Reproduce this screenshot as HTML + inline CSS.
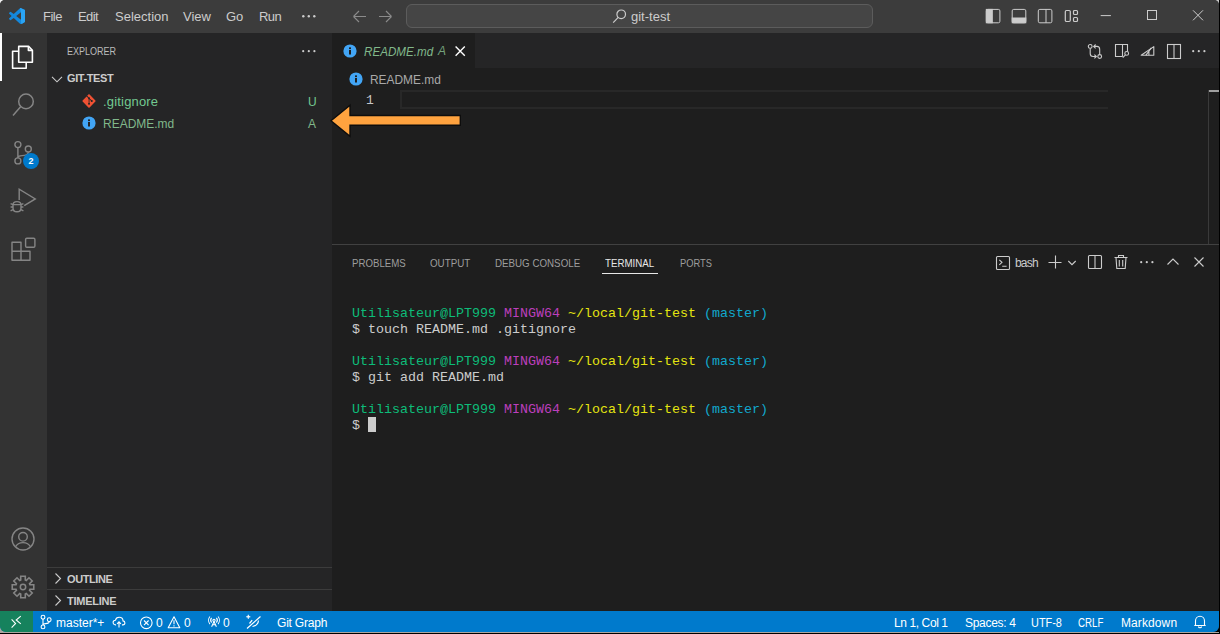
<!DOCTYPE html>
<html><head><meta charset="utf-8">
<style>
*{margin:0;padding:0;box-sizing:border-box}
html,body{width:1220px;height:634px;overflow:hidden;background:#000}
body{position:relative;font-family:"Liberation Sans",sans-serif;}
.a{position:absolute;white-space:nowrap;line-height:1}
.m{font-family:"Liberation Mono",monospace}
svg{position:absolute;overflow:visible}
</style></head><body>
<!-- window frame -->
<div class="a" style="left:0;top:0;width:6px;height:6px;background:#f0f0f0"></div>
<div class="a" style="left:1213px;top:0;width:6px;height:6px;background:#c8c8c8"></div>
<div class="a" style="left:0;top:0;width:1219px;height:632px;background:#3c3c3c;border-radius:5px 5px 6px 6px"></div>
<div class="a" style="left:0;top:632px;width:1219px;height:1px;background:#aca6a0"></div>
<div class="a" style="left:0;top:620px;width:8px;height:12px;background:#aca6a0"></div>

<!-- TITLE BAR -->
<div id="title" class="a" style="left:0;top:0;width:1219px;height:33px;background:#3c3c3c;border-radius:5px 5px 0 0"></div>

<!-- TITLE CONTENT -->
<svg style="left:9px;top:8px" width="16" height="16" viewBox="0 0 100 100">
<path fill="#1488dc" d="M96.5 10.8 75.9.9a6.2 6.2 0 0 0-7.1 1.2L29.4 38 12.2 25a4.2 4.2 0 0 0-5.3.2l-5.5 5a4.2 4.2 0 0 0 0 6.2L16.3 50 1.4 63.6a4.2 4.2 0 0 0 0 6.2l5.5 5a4.2 4.2 0 0 0 5.3.2l17.2-13 39.4 35.9a6.2 6.2 0 0 0 7.1 1.2l20.6-9.9a6.2 6.2 0 0 0 3.5-5.6V16.4a6.2 6.2 0 0 0-3.5-5.6zM75 72.7 45.1 50 75 27.3z"/>
<path fill="#007ACC" d="M96.5 10.8 75.9.9a6.2 6.2 0 0 0-7.1 1.2L29.4 38 12.2 25a4.2 4.2 0 0 0-5.3.2l-5.5 5a4.2 4.2 0 0 0 0 6.2L16.3 50 1.4 63.6a4.2 4.2 0 0 0 0 6.2l5.5 5a4.2 4.2 0 0 0 5.3.2l17.2-13 39.4 35.9a6.2 6.2 0 0 0 7.1 1.2l20.6-9.9a6.2 6.2 0 0 0 3.5-5.6V16.4a6.2 6.2 0 0 0-3.5-5.6zM75 72.7 45.1 50 75 27.3z" opacity=".0"/>
<path fill="#2aa4f4" d="M75.9 99.1a6.2 6.2 0 0 0 7.1-1.2l-.1.1L96.5 89.2a6.2 6.2 0 0 0 3.5-5.6V16.4a6.2 6.2 0 0 0-3.5-5.6L75.9.9A6.2 6.2 0 0 0 68.8 2.1L75 27.3v45.4z"/>
</svg>
<div class="a" style="left:43px;top:10px;font-size:13px;color:#cccccc;letter-spacing:-0.5px">File</div>
<div class="a" style="left:78px;top:10px;font-size:13px;color:#cccccc;letter-spacing:-0.6px">Edit</div>
<div class="a" style="left:115px;top:10px;font-size:13px;color:#cccccc">Selection</div>
<div class="a" style="left:183px;top:10px;font-size:13px;color:#cccccc">View</div>
<div class="a" style="left:226px;top:10px;font-size:13px;color:#cccccc">Go</div>
<div class="a" style="left:259px;top:10px;font-size:13px;color:#cccccc;letter-spacing:-0.6px">Run</div>
<svg style="left:302px;top:15px" width="14" height="3"><circle cx="1.3" cy="1.3" r="1.2" fill="#cccccc"/><circle cx="6.8" cy="1.3" r="1.2" fill="#cccccc"/><circle cx="12.3" cy="1.3" r="1.2" fill="#cccccc"/></svg>
<svg style="left:352px;top:9px" width="15" height="15" fill="none" stroke="#8b8b8b" stroke-width="1.1"><path d="M1.5 7.5H14M1.5 7.5L7 2M1.5 7.5L7 13"/></svg>
<svg style="left:378px;top:9px" width="15" height="15" fill="none" stroke="#8b8b8b" stroke-width="1.1"><path d="M1 7.5H13.5M13.5 7.5L8 2M13.5 7.5L8 13"/></svg>
<div class="a" style="left:406px;top:4px;width:467px;height:24px;background:#454545;border:1px solid #5c5c5c;border-radius:6px"></div>
<svg style="left:612px;top:9px" width="15" height="15" fill="none" stroke="#cccccc" stroke-width="1.2"><circle cx="9.2" cy="5.3" r="4.3"/><path d="M6.2 8.4L1.2 13.6"/></svg>
<div class="a" style="left:631px;top:10px;font-size:13px;color:#cccccc">git-test</div>
<!-- layout icons -->
<svg style="left:985px;top:8px" width="16" height="16" fill="none" stroke="#cccccc" stroke-width="1"><rect x="1.3" y="1.4" width="13.6" height="13.4" rx="1.5"/><rect x="1.3" y="1.4" width="6" height="13.4" fill="#cccccc"/></svg>
<svg style="left:1011px;top:8px" width="16" height="16" fill="none" stroke="#cccccc" stroke-width="1"><rect x="1.2" y="1.4" width="13.6" height="13.4" rx="1.5"/><rect x="1.2" y="10" width="13.6" height="4.8" fill="#cccccc"/></svg>
<svg style="left:1037px;top:8px" width="16" height="16" fill="none" stroke="#cccccc" stroke-width="1"><rect x="1.3" y="1.4" width="13.6" height="13.4" rx="1.5"/><path d="M9 1.4V14.8"/></svg>
<svg style="left:1064px;top:8px" width="16" height="16" fill="none" stroke="#cccccc" stroke-width="1.2"><rect x="1.3" y="2.5" width="5" height="11" rx="1.2"/><rect x="9.5" y="2.5" width="4" height="4" rx="1"/><rect x="9.5" y="9.5" width="4" height="4" rx="1"/></svg>
<svg style="left:1100px;top:10px" width="12" height="12" fill="none" stroke="#cccccc" stroke-width="1"><path d="M0.7 5.6H10.9"/></svg>
<svg style="left:1146px;top:9px" width="12" height="12" fill="none" stroke="#cccccc" stroke-width="1"><rect x="1.5" y="1.5" width="9" height="9"/></svg>
<svg style="left:1192px;top:9px" width="12" height="12" fill="none" stroke="#cccccc" stroke-width="1"><path d="M1 1.3L11 11.3M11 1.3L1 11.3"/></svg>

<!-- ACTIVITY BAR -->
<div class="a" style="left:0;top:33px;width:47px;height:578px;background:#333333"></div>
<!-- SIDEBAR -->

<div class="a" style="left:47px;top:33px;width:285px;height:578px;background:#252526"></div>
<!-- EDITOR -->
<div class="a" style="left:332px;top:33px;width:887px;height:578px;background:#1e1e1e"></div>
<div class="a" style="left:332px;top:33px;width:887px;height:35px;background:#252526"></div>
<div class="a" style="left:332px;top:33px;width:143px;height:35px;background:#1e1e1e"></div>
<!-- ACTIVITY ICONS -->
<div class="a" style="left:0;top:33px;width:2px;height:48px;background:#ffffff"></div>
<svg style="left:10px;top:44px" width="26" height="27" fill="none" stroke="#ffffff" stroke-width="1.6" stroke-linejoin="round">
<path d="M8.7 2.4H18.6L22.4 6.2V18.3H8.7Z"/><path d="M18.4 2.6V6.4H22.2"/><path d="M8.7 7.2H2.6V24.3H16.2V18.5"/>
</svg>
<svg style="left:10px;top:91px" width="28" height="28" fill="none" stroke="#858585" stroke-width="1.5"><circle cx="16" cy="10.4" r="7.3"/><path d="M10.8 15.6L3 24.5"/></svg>
<svg style="left:10px;top:136px" width="28" height="30" fill="none" stroke="#858585" stroke-width="1.4"><circle cx="7.9" cy="8.6" r="3"/><circle cx="18.3" cy="13" r="3"/><circle cx="7.9" cy="24.9" r="3"/><path d="M7.9 11.6V21.9M18.3 16C18.3 19 16 19.6 12 19.6C9.5 19.6 7.9 20.2 7.9 21.9"/></svg>
<div class="a" style="left:23px;top:153px;width:16px;height:16px;border-radius:8px;background:#007acc;color:#fff;font-size:9px;font-weight:bold;text-align:center;line-height:16px">2</div>
<svg style="left:8px;top:186px" width="30" height="30" fill="none" stroke="#858585" stroke-width="1.4" stroke-linejoin="miter">
<path d="M11.2 14V3.2L27.3 12.9L16.2 19.6"/>
<path d="M5 19C5 16.6 6.8 15.6 9 15.6C11.2 15.6 13 16.6 13 19V22C13 24.4 11.2 25.8 9 25.8C6.8 25.8 5 24.4 5 22Z"/><path d="M5 18.6H13M2.6 17.6L5 18.6M15.4 17.6L13 18.6M2.6 21H5M15.4 21H13M2.6 24.8L5 23.6M15.4 24.8L13 23.6"/>
</svg>
<svg style="left:8px;top:234px" width="30" height="30" fill="none" stroke="#858585" stroke-width="1.4" stroke-linejoin="round">
<path d="M4 8.3H13V17.3H22V26.3H4Z"/><path d="M4 17.3H13V26.3"/><rect x="17.6" y="4.2" width="9.3" height="9" rx="1.2"/>
</svg>
<svg style="left:8px;top:524px" width="30" height="30" fill="none" stroke="#858585" stroke-width="1.4"><circle cx="15" cy="15" r="11"/><circle cx="15" cy="12.8" r="4.3"/><path d="M7.4 22.9C9 19.8 11.8 18.6 15 18.6C18.2 18.6 21 19.8 22.6 22.9"/></svg>
<svg style="left:8px;top:572px" width="30" height="30" viewBox="0 0 30 30" fill="none" stroke="#858585" stroke-width="1.6" stroke-linejoin="miter"><path d="M12.70 8.07L12.70 4.24L17.30 4.24L17.30 8.07L18.27 8.47L20.98 5.77L24.23 9.02L21.53 11.73L21.93 12.70L25.76 12.70L25.76 17.30L21.93 17.30L21.53 18.27L24.23 20.98L20.98 24.23L18.27 21.53L17.30 21.93L17.30 25.76L12.70 25.76L12.70 21.93L11.73 21.53L9.02 24.23L5.77 20.98L8.47 18.27L8.07 17.30L4.24 17.30L4.24 12.70L8.07 12.70L8.47 11.73L5.77 9.02L9.02 5.77L11.73 8.47Z"/><circle cx="15" cy="15" r="2.7" stroke-width="1.5"/></svg>

<!-- SIDEBAR CONTENT -->
<div class="a" style="left:67px;top:46px;font-size:11px;color:#bbbbbb;transform:scaleX(0.82);transform-origin:0 0">EXPLORER</div>
<svg style="left:302px;top:50px" width="15" height="3"><circle cx="1.2" cy="1.2" r="1.1" fill="#cccccc"/><circle cx="6.8" cy="1.2" r="1.1" fill="#cccccc"/><circle cx="12.4" cy="1.2" r="1.1" fill="#cccccc"/></svg>
<svg style="left:50px;top:72px" width="14" height="14" fill="none" stroke="#cccccc" stroke-width="1.1"><path d="M2 4.8L7 9.8L12 4.8"/></svg>
<div class="a" style="left:67px;top:73px;font-size:11px;font-weight:bold;color:#cccccc;letter-spacing:-0.4px">GIT-TEST</div>
<svg style="left:82px;top:94px" width="14" height="14" viewBox="0 0 97 97"><path fill="#f05133" d="M92.71 44.408 52.591 4.291c-2.31-2.311-6.057-2.311-8.369 0l-8.33 8.332L46.459 23.19c2.456-.83 5.272-.273 7.229 1.685 1.969 1.97 2.521 4.81 1.67 7.275l10.186 10.185c2.465-.85 5.307-.3 7.275 1.671 2.75 2.75 2.75 7.206 0 9.958-2.752 2.751-7.208 2.751-9.961 0-2.068-2.07-2.58-5.11-1.531-7.658l-9.5-9.499v24.997c.67.332 1.303.774 1.861 1.332 2.75 2.75 2.750 7.206 0 9.959-2.75 2.749-7.209 2.749-9.957 0-2.75-2.754-2.75-7.21 0-9.959.68-.679 1.467-1.193 2.307-1.537v-25.23c-.84-.344-1.625-.853-2.307-1.537-2.083-2.082-2.584-5.14-1.516-7.698L31.798 16.715 4.288 44.222c-2.311 2.313-2.311 6.06 0 8.371l40.121 40.118c2.31 2.311 6.056 2.311 8.369 0L92.71 52.779c2.311-2.311 2.311-6.06 0-8.371z"/></svg>
<div class="a" style="left:103px;top:95px;font-size:13px;color:#73c991;letter-spacing:0.18px">.gitignore</div>
<div class="a" style="left:308px;top:96px;font-size:12px;color:#73c991">U</div>
<svg style="left:82px;top:116px" width="14" height="14" viewBox="0 0 14 14"><circle cx="7" cy="7" r="6.6" fill="#42a5f5"/><rect x="6" y="6" width="2" height="4.5" fill="#252526"/><rect x="6" y="3.4" width="2" height="1.7" fill="#252526"/></svg>
<div class="a" style="left:103px;top:117px;font-size:13px;color:#81b88b;transform:scaleX(0.922);transform-origin:0 0">README.md</div>
<div class="a" style="left:308px;top:118px;font-size:12px;color:#81b88b">A</div>
<div class="a" style="left:47px;top:567px;width:285px;height:1px;background:#3c3c3c"></div>
<svg style="left:51px;top:571px" width="14" height="14" fill="none" stroke="#cccccc" stroke-width="1.1"><path d="M4.5 2.5L9.5 7.5L4.5 12.5"/></svg>
<div class="a" style="left:67px;top:574px;font-size:11px;font-weight:bold;color:#cccccc;letter-spacing:-0.4px">OUTLINE</div>
<div class="a" style="left:47px;top:589px;width:285px;height:1px;background:#3c3c3c"></div>
<svg style="left:51px;top:593px" width="14" height="14" fill="none" stroke="#cccccc" stroke-width="1.1"><path d="M4.5 2.5L9.5 7.5L4.5 12.5"/></svg>
<div class="a" style="left:67px;top:596px;font-size:11px;font-weight:bold;color:#cccccc;letter-spacing:-0.25px">TIMELINE</div>

<!-- EDITOR CONTENT -->
<svg style="left:343px;top:44px" width="14" height="14" viewBox="0 0 14 14"><circle cx="7" cy="7" r="6.6" fill="#42a5f5"/><rect x="6" y="6" width="2" height="4.5" fill="#1e1e1e"/><rect x="6" y="3.4" width="2" height="1.7" fill="#1e1e1e"/></svg>
<div class="a" style="left:364px;top:45px;font-size:13px;font-style:italic;color:#81b88b;transform:scaleX(0.894);transform-origin:0 0">README.md</div>
<div class="a" style="left:438px;top:45px;font-size:12px;font-style:italic;color:#81b88b;opacity:.85">A</div>
<svg style="left:454px;top:45px" width="12" height="12" fill="none" stroke="#ffffff" stroke-width="1.4"><path d="M1.6 1.5L10.8 10.7M10.8 1.5L1.6 10.7"/></svg>
<svg style="left:349px;top:72px" width="14" height="14" viewBox="0 0 14 14"><circle cx="7" cy="7" r="6.6" fill="#42a5f5"/><rect x="6" y="6" width="2" height="4.5" fill="#1e1e1e"/><rect x="6" y="3.4" width="2" height="1.7" fill="#1e1e1e"/></svg>
<div class="a" style="left:370px;top:73px;font-size:13px;color:#a9a9a9;transform:scaleX(0.917);transform-origin:0 0">README.md</div>
<div class="a" style="left:400px;top:90px;width:708px;height:19px;border:2px solid #282828;border-right:none"></div>
<div class="a m" style="left:366px;top:94px;font-size:13px;color:#c6c6c6">1</div>
<div class="a" style="left:1208px;top:90px;width:1px;height:154px;background:#3a3a3a"></div>
<div class="a" style="left:1209px;top:90px;width:10px;height:2px;background:#a0a0a0"></div>
<!-- editor actions -->
<svg style="left:1087px;top:43px" width="17" height="17" fill="none" stroke="#cccccc" stroke-width="1.1"><circle cx="3.2" cy="3.4" r="1.9"/><circle cx="12.7" cy="13.5" r="1.9"/><path d="M3.2 5.3V10.5C3.2 12.3 4.3 13.5 6 13.5H9.2M7.4 11.6L9.3 13.5L7.4 15.4M12.7 11.6V6.4C12.7 4.6 11.6 3.4 9.9 3.4H6.8M8.6 1.5L6.7 3.4L8.6 5.3"/></svg>
<svg style="left:1114px;top:43px" width="17" height="17" fill="none" stroke="#cccccc" stroke-width="1.1"><path d="M8.5 1.5H1.5V13.5H8.7M8.5 1.5H13.5V8.6M8.5 1.5V13.5"/><circle cx="12.7" cy="10.4" r="1.9"/><path d="M11.4 11.8L8.8 14.6"/></svg>
<svg style="left:1139px;top:43px" width="17" height="17" fill="none" stroke="#cccccc" stroke-width="1.1" stroke-linejoin="round"><path d="M2.2 12.3L14.8 3.6V12.3Z"/><path d="M6.8 12.3L12.3 4.9M9.9 12.3V8.3"/></svg>
<svg style="left:1166px;top:43px" width="16" height="17" fill="none" stroke="#cccccc" stroke-width="1.1"><rect x="1.5" y="1.5" width="13" height="14"/><path d="M8 1.5V15.5"/></svg>
<svg style="left:1192px;top:50px" width="15" height="3"><circle cx="1.2" cy="1.2" r="1.1" fill="#cccccc"/><circle cx="6.8" cy="1.2" r="1.1" fill="#cccccc"/><circle cx="12.4" cy="1.2" r="1.1" fill="#cccccc"/></svg>
<!-- arrow -->
<svg style="left:328px;top:103px" width="136" height="36" viewBox="0 0 136 36"><path d="M3 17.7L22 2.2V12.5H132.3V22.2H22V33.2Z" fill="#ffa33f" stroke="#0d0d0d" stroke-width="1.4" stroke-linejoin="miter"/></svg>

<!-- PANEL BORDER -->
<div class="a" style="left:332px;top:244px;width:887px;height:1px;background:#414141"></div>

<!-- PANEL CONTENT -->
<div class="a" style="left:352px;top:258px;font-size:11px;color:#9d9d9d;transform:scaleX(0.879);transform-origin:0 0">PROBLEMS</div>
<div class="a" style="left:430px;top:258px;font-size:11px;color:#9d9d9d;transform:scaleX(0.889);transform-origin:0 0">OUTPUT</div>
<div class="a" style="left:495px;top:258px;font-size:11px;color:#9d9d9d;transform:scaleX(0.8875);transform-origin:0 0">DEBUG CONSOLE</div>
<div class="a" style="left:605px;top:258px;font-size:11px;color:#e7e7e7;transform:scaleX(0.882);transform-origin:0 0">TERMINAL</div>
<div class="a" style="left:602px;top:273px;width:56px;height:1px;background:#e7e7e7"></div>
<div class="a" style="left:680px;top:258px;font-size:11px;color:#9d9d9d;transform:scaleX(0.847);transform-origin:0 0">PORTS</div>
<!-- panel actions -->
<svg style="left:995px;top:255px" width="16" height="16" fill="none" stroke="#cccccc" stroke-width="1.1"><rect x="1.5" y="1.5" width="13" height="13" rx="1"/><path d="M4.3 4.8L7 7.3L4.3 9.8M7.2 11.3H11.6"/></svg>
<div class="a" style="left:1015px;top:257px;font-size:12px;color:#cccccc;letter-spacing:-0.8px">bash</div>
<svg style="left:1047px;top:254px" width="16" height="16" fill="none" stroke="#cccccc" stroke-width="1.1"><path d="M8.5 1.5V14.5M1.5 8.5H14.5"/></svg>
<svg style="left:1067px;top:258px" width="10" height="10" fill="none" stroke="#cccccc" stroke-width="1.1"><path d="M1.3 3L5 6.7L8.7 3"/></svg>
<svg style="left:1087px;top:254px" width="16" height="16" fill="none" stroke="#cccccc" stroke-width="1.1"><rect x="1.5" y="1.5" width="13" height="13" rx="1"/><path d="M8 1.5V14.5"/></svg>
<svg style="left:1113px;top:254px" width="16" height="16" fill="none" stroke="#cccccc" stroke-width="1.1"><path d="M1.5 3.5H14.5M5.5 3.5V1.5H10.5V3.5M3 3.5L3.8 14.5H12.2L13 3.5M6.3 6V12.5M9.7 6V12.5"/></svg>
<svg style="left:1140px;top:261px" width="15" height="3"><circle cx="1.2" cy="1.2" r="1.1" fill="#cccccc"/><circle cx="6.8" cy="1.2" r="1.1" fill="#cccccc"/><circle cx="12.4" cy="1.2" r="1.1" fill="#cccccc"/></svg>
<svg style="left:1166px;top:255px" width="14" height="14" fill="none" stroke="#cccccc" stroke-width="1.1"><path d="M1.5 9.5L7 4L12.5 9.5"/></svg>
<svg style="left:1192px;top:255px" width="14" height="14" fill="none" stroke="#cccccc" stroke-width="1.1"><path d="M2.5 2.5L11.5 11.5M11.5 2.5L2.5 11.5"/></svg>
<!-- terminal -->
<div class="a m" style="left:352px;top:306px;font-size:13.33px;line-height:16px;color:#cccccc;white-space:pre"><span style="color:#0dbc79">Utilisateur@LPT999</span> <span style="color:#bc3fbc">MINGW64</span> <span style="color:#e5e510">~/local/git-test</span> <span style="color:#11a8cd">(master)</span>
$ touch README.md .gitignore

<span style="color:#0dbc79">Utilisateur@LPT999</span> <span style="color:#bc3fbc">MINGW64</span> <span style="color:#e5e510">~/local/git-test</span> <span style="color:#11a8cd">(master)</span>
$ git add README.md

<span style="color:#0dbc79">Utilisateur@LPT999</span> <span style="color:#bc3fbc">MINGW64</span> <span style="color:#e5e510">~/local/git-test</span> <span style="color:#11a8cd">(master)</span>
$ </div>
<div class="a" style="left:368px;top:417px;width:8px;height:15px;background:#cccccc"></div>

<!-- STATUS BAR -->
<div class="a" style="left:0;top:611px;width:1219px;height:21px;background:#007acc;border-radius:0 0 6px 6px"></div>
<div class="a" style="left:0;top:611px;width:33px;height:21px;background:#16825d;border-radius:0 0 0 6px"></div>

<!-- STATUS CONTENT -->
<svg style="left:10px;top:615px" width="13" height="14" fill="none" stroke="#ffffff" stroke-width="1.1"><path d="M1.6 4.3L5.6 8.5L1.6 12.7M10.8 1.1L6.2 5L10.8 8.8"/></svg>
<svg style="left:39px;top:614px" width="14" height="15" fill="none" stroke="#ffffff" stroke-width="1.1"><circle cx="4" cy="3.2" r="1.9"/><circle cx="10.2" cy="5.7" r="1.9"/><circle cx="4" cy="12.9" r="1.9"/><path d="M4 5.1V11M10.2 7.6C10.2 9.3 9 9.6 6.6 9.6C5 9.6 4 10 4 11"/></svg>
<div class="a" style="left:56px;top:617px;font-size:12px;color:#ffffff;letter-spacing:0px">master*+</div>
<svg style="left:111px;top:615px" width="16" height="14" viewBox="-1.5 -1.2 19 16.6" fill="none" stroke="#ffffff" stroke-width="1.3"><path d="M4.5 10.5H3.8C2.2 10.5 1 9.3 1 7.8C1 6.3 2.2 5.1 3.7 5.1C4.2 2.9 6 1.5 8.2 1.5C10.7 1.5 12.7 3.4 12.8 5.8C14.1 6 15 7.1 15 8.3C15 9.6 13.9 10.5 12.6 10.5H11.5M8 13.5V7M5.7 9.2L8 6.9L10.3 9.2"/></svg>
<svg style="left:139px;top:616px" width="14" height="14" fill="none" stroke="#ffffff" stroke-width="1.1"><circle cx="7.3" cy="6.8" r="5.8"/><path d="M5 4.5L9.6 9.1M9.6 4.5L5 9.1"/></svg>
<div class="a" style="left:156px;top:617px;font-size:12px;color:#ffffff">0</div>
<svg style="left:167px;top:615px" width="14" height="14" fill="none" stroke="#ffffff" stroke-width="1.1" stroke-linejoin="round"><path d="M7 1.8L12.8 12.7H1.2Z"/><path d="M7 5.2V9.3M7 10.3V11.5"/></svg>
<div class="a" style="left:184px;top:617px;font-size:12px;color:#ffffff">0</div>
<svg style="left:207px;top:615px" width="14" height="14" viewBox="-0.9 -0.5 15.8 15.8" fill="none" stroke="#ffffff" stroke-width="1.2"><circle cx="7" cy="5.5" r="1.3"/><path d="M7 6.8L4.3 12.8M7 6.8L9.7 12.8M5.2 10.5H8.8M4.3 2.8C3 4.3 3 6.7 4.3 8.2M9.7 2.8C11 4.3 11 6.7 9.7 8.2M2.4 1.2C0.4 3.6 0.4 7.4 2.4 9.8M11.6 1.2C13.6 3.6 13.6 7.4 11.6 9.8"/></svg>
<div class="a" style="left:223px;top:617px;font-size:12px;color:#ffffff">0</div>
<svg style="left:245px;top:614px" width="17" height="16" fill="none" stroke="#ffffff" stroke-width="1.2"><path d="M15.5 2.5L2 14.5M13.5 6.5C13.5 9.2 11 12 7.5 12.5M7.2 6.2L4.5 9.5"/><path d="M3.3 0.8L3.8 2.3L5.3 2.8L3.8 3.3L3.3 4.8L2.8 3.3L1.3 2.8L2.8 2.3Z" fill="#ffffff" stroke-width="0.6"/></svg>
<div class="a" style="left:277px;top:617px;font-size:12px;color:#ffffff;letter-spacing:-0.2px">Git Graph</div>
<div class="a" style="left:894px;top:617px;font-size:12px;color:#ffffff;letter-spacing:-0.4px">Ln 1, Col 1</div>
<div class="a" style="left:965px;top:617px;font-size:12px;color:#ffffff;letter-spacing:-0.3px">Spaces: 4</div>
<div class="a" style="left:1031px;top:617px;font-size:12px;color:#ffffff;transform:scaleX(0.91);transform-origin:0 0">UTF-8</div>
<div class="a" style="left:1078px;top:617px;font-size:12px;color:#ffffff;transform:scaleX(0.81);transform-origin:0 0">CRLF</div>
<div class="a" style="left:1121px;top:617px;font-size:12px;color:#ffffff;letter-spacing:0.1px">Markdown</div>
<svg style="left:1193px;top:615px" width="14" height="14" fill="none" stroke="#ffffff" stroke-width="1.1"><path d="M2.5 10.5V6C2.5 3.3 4.5 1.3 7 1.3C9.5 1.3 11.5 3.3 11.5 6V10.5H2.5ZM1.3 10.5H12.7M5.5 11.5C5.5 12.3 6.2 12.8 7 12.8C7.8 12.8 8.5 12.3 8.5 11.5"/></svg>

</body></html>
